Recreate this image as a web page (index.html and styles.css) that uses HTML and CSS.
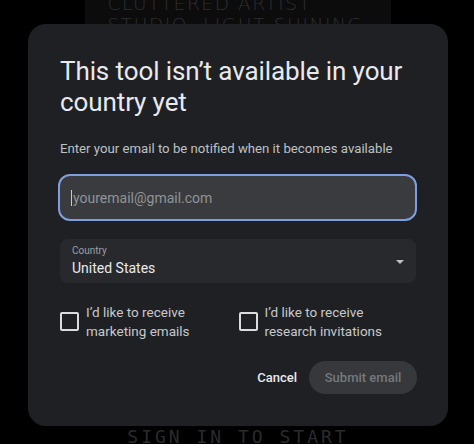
FILE: index.html
```html
<!DOCTYPE html>
<html>
<head>
<meta charset="utf-8">
<link rel="stylesheet" href="styles.css">
</head>
<body>
<div class="page">
  <div class="bg-card">
    <p class="bg-prompt">CLUTTERED ARTIST<br>STUDIO, LIGHT SHINING</p>
  </div>
  <div class="bg-side"></div>
  <div class="bg-signin">SIGN IN TO START</div>
</div>

<div class="dialog">
  <h1 class="title">This tool isn’t available in your country yet</h1>
  <p class="subtitle">Enter your email to be notified when it becomes available</p>
  <div class="email-field">
    <span class="caret"></span><span class="placeholder">youremail@gmail.com</span>
  </div>
  <div class="select-field">
    <div class="select-text">
      <span class="select-label">Country</span>
      <span class="select-value">United States</span>
    </div>
    <span class="select-arrow"></span>
  </div>
  <div class="checks">
    <label class="check">
      <span class="box"></span>
      <span class="check-text">I’d like to receive<br>marketing emails</span>
    </label>
    <label class="check">
      <span class="box"></span>
      <span class="check-text">I’d like to receive<br>research invitations</span>
    </label>
  </div>
  <div class="actions">
    <button class="btn-cancel">Cancel</button>
    <button class="btn-submit">Submit email</button>
  </div>
</div>
</body>
</html>
```

FILE: styles.css
```css
* { box-sizing: border-box; }
html, body { margin: 0; padding: 0; }
body {
  width: 474px;
  height: 444px;
  background: #000;
  overflow: hidden;
  position: relative;
  font-family: Roboto, "Liberation Sans", sans-serif;
}
.page {
  height: 444px;
  display: flex;
  flex-direction: column;
  align-items: center;
}
.bg-card {
  width: 306px;
  height: 60px;
  margin-left: 1px;
  background: #0c0c0d;
  border-radius: 0 0 10px 10px;
  padding: 0 0 0 23px;
}
.bg-prompt {
  margin: -7px 0 0 0;
  font-family: "DejaVu Sans", sans-serif;
  font-weight: 200;
  font-size: 18.5px;
  line-height: 21px;
  letter-spacing: 1.6px;
  color: #2e2f31;
  white-space: nowrap;
}
.bg-side {
  flex: 1;
}
.bg-signin {
  font-family: "DejaVu Sans Mono", "Liberation Mono", monospace;
  font-size: 18px;
  letter-spacing: 3px;
  color: #2a2b2c;
  margin: 0 0 -3px 2px;
  line-height: 20px;
}
.dialog {
  position: absolute;
  left: 28px;
  top: 24px;
  width: 420px;
  height: 402px;
  background: #1f2023;
  border-radius: 18px;
  padding: 32px 31px 32px 30px;
  display: flex;
  flex-direction: column;
}
.title {
  margin: 0 0 0 2px;
  font-weight: 400;
  font-size: 26px;
  line-height: 31px;
  color: #e8eaed;
  letter-spacing: -0.1px;
}
.subtitle {
  margin: 22px 0 0 2px;
  font-size: 13.2px;
  line-height: 18px;
  color: #bdc1c6;
}
.email-field {
  margin-top: 16px;
  height: 47px;
  border: 2px solid #7f9ee0;
  border-radius: 12px;
  background: #3a3b3e;
  display: flex;
  align-items: center;
  padding-left: 11px;
}
.caret {
  width: 1px;
  height: 16px;
  background: #c9ccd0;
  margin-right: 1px;
}
.placeholder {
  font-size: 14px;
  color: #8f9398;
}
.select-field {
  margin: 18px 1px 0 2px;
  height: 44px;
  border-radius: 8px;
  background: #28292c;
  display: flex;
  align-items: center;
  justify-content: space-between;
  padding: 0 12px 0 12px;
}
.select-text {
  display: flex;
  flex-direction: column;
}
.select-label {
  font-size: 10px;
  line-height: 12px;
  color: #9aa0a6;
}
.select-value {
  font-size: 14px;
  line-height: 18px;
  color: #e8eaed;
  margin-top: 2px;
}
.select-arrow {
  width: 0;
  height: 0;
  border-left: 4px solid transparent;
  border-right: 4px solid transparent;
  border-top: 4px solid #bdc1c6;
  margin-top: 2px;
}
.checks {
  margin: 20px 0 0 2px;
  display: flex;
}
.check {
  width: 185px;
  display: flex;
  align-items: flex-start;
  gap: 7px;
}
.box {
  flex: none;
  width: 19px;
  height: 19px;
  border: 2px solid #dadce0;
  border-radius: 2px;
  margin-top: 9px;
}
.check-text {
  font-size: 13.5px;
  line-height: 19px;
  color: #c6c9cd;
}
.actions {
  margin-top: auto;
  display: flex;
  justify-content: flex-end;
  align-items: center;
  gap: 12px;
}
.btn-cancel {
  background: none;
  border: 0;
  padding: 0;
  font-family: inherit;
  font-size: 13px;
  font-weight: 500;
  color: #e8eaed;
}
.btn-submit {
  width: 108px;
  height: 33px;
  border: 0;
  border-radius: 17px;
  background: #37383b;
  font-family: inherit;
  font-size: 13px;
  font-weight: 500;
  color: #75787d;
}
```
